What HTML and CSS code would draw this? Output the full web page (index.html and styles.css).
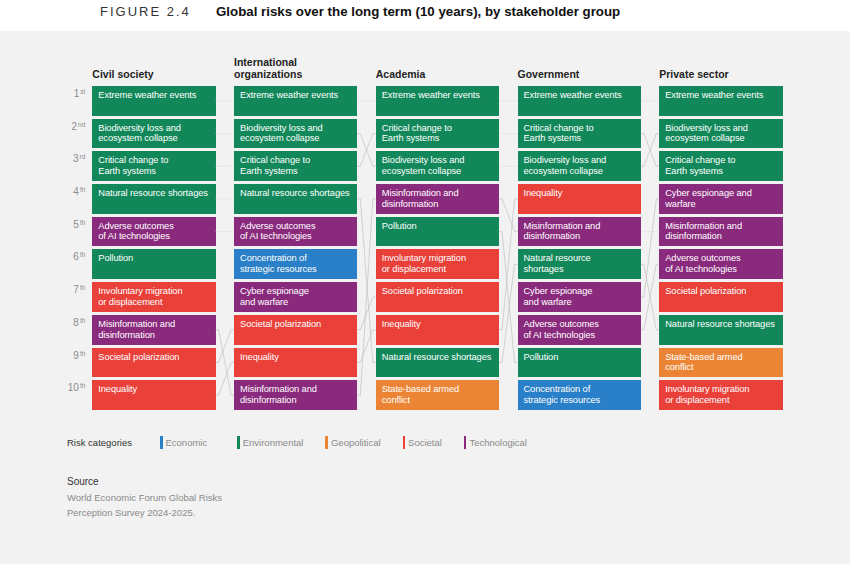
FILE: index.html
```html
<!DOCTYPE html>
<html lang="en">
<head>
<meta charset="utf-8">
<title>Global risks over the long term (10 years), by stakeholder group</title>
<link rel="stylesheet" href="styles.css">
</head>
<body>
<header class="title">
  <span class="fig-num">FIGURE 2.4</span>
  <h1 class="fig-title">Global risks over the long term (10 years), by stakeholder group</h1>
</header>
<main class="panel">
  <div class="chart">
    <div class="ranks">
      <div class="rank">1<sup>st</sup></div>
      <div class="rank">2<sup>nd</sup></div>
      <div class="rank">3<sup>rd</sup></div>
      <div class="rank">4<sup>th</sup></div>
      <div class="rank">5<sup>th</sup></div>
      <div class="rank">6<sup>th</sup></div>
      <div class="rank">7<sup>th</sup></div>
      <div class="rank">8<sup>th</sup></div>
      <div class="rank">9<sup>th</sup></div>
      <div class="rank">10<sup>th</sup></div>
    </div>
    <div class="col">
      <div class="col-head">Civil society</div>
      <div class="box env">Extreme weather events</div>
      <div class="box env">Biodiversity loss and<br>ecosystem collapse</div>
      <div class="box env">Critical change to<br>Earth systems</div>
      <div class="box env">Natural resource shortages</div>
      <div class="box tech">Adverse outcomes<br>of AI technologies</div>
      <div class="box env">Pollution</div>
      <div class="box soc">Involuntary migration<br>or displacement</div>
      <div class="box tech">Misinformation and<br>disinformation</div>
      <div class="box soc">Societal polarization</div>
      <div class="box soc">Inequality</div>
    </div>
    <div class="col">
      <div class="col-head">International<br>organizations</div>
      <div class="box env">Extreme weather events</div>
      <div class="box env">Biodiversity loss and<br>ecosystem collapse</div>
      <div class="box env">Critical change to<br>Earth systems</div>
      <div class="box env">Natural resource shortages</div>
      <div class="box tech">Adverse outcomes<br>of AI technologies</div>
      <div class="box econ">Concentration of<br>strategic resources</div>
      <div class="box tech">Cyber espionage<br>and warfare</div>
      <div class="box soc">Societal polarization</div>
      <div class="box soc">Inequality</div>
      <div class="box tech">Misinformation and<br>disinformation</div>
    </div>
    <div class="col">
      <div class="col-head">Academia</div>
      <div class="box env">Extreme weather events</div>
      <div class="box env">Critical change to<br>Earth systems</div>
      <div class="box env">Biodiversity loss and<br>ecosystem collapse</div>
      <div class="box tech">Misinformation and<br>disinformation</div>
      <div class="box env">Pollution</div>
      <div class="box soc">Involuntary migration<br>or displacement</div>
      <div class="box soc">Societal polarization</div>
      <div class="box soc">Inequality</div>
      <div class="box env">Natural resource shortages</div>
      <div class="box geo">State-based armed<br>conflict</div>
    </div>
    <div class="col">
      <div class="col-head">Government</div>
      <div class="box env">Extreme weather events</div>
      <div class="box env">Critical change to<br>Earth systems</div>
      <div class="box env">Biodiversity loss and<br>ecosystem collapse</div>
      <div class="box soc">Inequality</div>
      <div class="box tech">Misinformation and<br>disinformation</div>
      <div class="box env">Natural resource<br>shortages</div>
      <div class="box tech">Cyber espionage<br>and warfare</div>
      <div class="box tech">Adverse outcomes<br>of AI technologies</div>
      <div class="box env">Pollution</div>
      <div class="box econ">Concentration of<br>strategic resources</div>
    </div>
    <div class="col">
      <div class="col-head">Private sector</div>
      <div class="box env">Extreme weather events</div>
      <div class="box env">Biodiversity loss and<br>ecosystem collapse</div>
      <div class="box env">Critical change to<br>Earth systems</div>
      <div class="box tech">Cyber espionage and<br>warfare</div>
      <div class="box tech">Misinformation and<br>disinformation</div>
      <div class="box tech">Adverse outcomes<br>of AI technologies</div>
      <div class="box soc">Societal polarization</div>
      <div class="box env">Natural resource shortages</div>
      <div class="box geo">State-based armed<br>conflict</div>
      <div class="box soc">Involuntary migration<br>or displacement</div>
    </div>
    <svg class="lines" viewBox="0 0 715.6 354" aria-hidden="true">
      <g class="same">
        <path d="M148.6 44.85H167.05M148.6 77.55H167.05M148.6 110.25H167.05M148.6 142.95H167.05M148.6 175.65H167.05"/>
        <path d="M290.35 44.85H308.8"/>
        <path d="M432.1 44.85H450.55M432.1 77.55H450.55M432.1 110.25H450.55"/>
        <path d="M573.85 44.85H592.3M573.85 175.65H592.3"/>
      </g>
      <g class="moved">
        <path d="M148.6 273.75H151.6L164.05 339.15H167.05"/>
        <path d="M148.6 306.45H151.6L164.05 273.75H167.05"/>
        <path d="M148.6 339.15H151.6L164.05 306.45H167.05"/>

        <path d="M290.35 77.55H293.35L305.8 110.25H308.8"/>
        <path d="M290.35 110.25H293.35L305.8 77.55H308.8"/>
        <path d="M290.35 142.95H293.35L305.8 306.45H308.8"/>
        <path d="M290.35 273.75H293.35L305.8 241.05H308.8"/>
        <path d="M290.35 306.45H293.35L305.8 273.75H308.8"/>
        <path d="M290.35 339.15H293.35L305.8 142.95H308.8"/>

        <path d="M432.1 142.95H435.1L447.55 175.65H450.55"/>
        <path d="M432.1 175.65H435.1L447.55 306.45H450.55"/>
        <path d="M432.1 273.75H435.1L447.55 142.95H450.55"/>
        <path d="M432.1 306.45H435.1L447.55 208.35H450.55"/>

        <path d="M573.85 77.55H576.85L589.3 110.25H592.3"/>
        <path d="M573.85 110.25H576.85L589.3 77.55H592.3"/>
        <path d="M573.85 208.35H576.85L589.3 273.75H592.3"/>
        <path d="M573.85 241.05H576.85L589.3 142.95H592.3"/>
        <path d="M573.85 273.75H576.85L589.3 208.35H592.3"/>
      </g>
    </svg>
  </div>

  <div class="legend">
    <span class="legend-label">Risk categories</span>
    <span class="legend-item legend-item-wide"><i class="swatch econ"></i>Economic</span>
    <span class="legend-item"><i class="swatch env"></i>Environmental</span>
    <span class="legend-item"><i class="swatch geo"></i>Geopolitical</span>
    <span class="legend-item"><i class="swatch soc"></i>Societal</span>
    <span class="legend-item"><i class="swatch tech"></i>Technological</span>
  </div>

  <div class="source">
    <div class="source-label">Source</div>
    <div class="source-text">World Economic Forum Global Risks<br>Perception Survey 2024-2025.</div>
  </div>
</main>
</body>
</html>
```

FILE: styles.css
```css
html, body {
  margin: 0;
  padding: 0;
}

body {
  width: 850px;
  height: 564px;
  overflow: hidden;
  background: #ffffff;
  font-family: "Liberation Sans", Arial, Helvetica, sans-serif;
  color: #222;
}

.title {
  height: 31px;
  box-sizing: border-box;
  padding: 4px 0 0 100px;
  display: flex;
  align-items: baseline;
  line-height: 16px;
}

.fig-num {
  width: 116px;
  font-size: 13px;
  letter-spacing: 2px;
  color: #333;
}

.fig-title {
  margin: 0;
  font-size: 13.3px;
  font-weight: bold;
  color: #111;
}

.panel {
  display: block;
  background: #f2f2f2;
  height: 533px;
  box-sizing: border-box;
  padding: 25px 0 0 67px;
}

.chart {
  position: relative;
  display: flex;
  width: 715.6px;
  height: 354px;
}

.lines {
  position: absolute;
  left: 0;
  top: 0;
  width: 715.6px;
  height: 354px;
  overflow: visible;
  pointer-events: none;
}

.lines path {
  fill: none;
}

.lines .same path {
  stroke: #cfcfcf;
  stroke-width: 0.8;
  stroke-dasharray: 1 1.5;
}

.lines .moved path {
  stroke: #c2c2c2;
  stroke-width: 0.7;
}

.ranks {
  width: 18.3px;
  margin-right: 7px;
  padding-top: 30px;
  display: flex;
  flex-direction: column;
  gap: 3px;
}

.rank {
  height: 29.7px;
  box-sizing: border-box;
  padding-top: 3px;
  text-align: right;
  font-size: 10px;
  line-height: 10px;
  color: #8c8c8c;
  white-space: nowrap;
}

.rank sup {
  font-size: 6.5px;
  line-height: 0;
  vertical-align: 3px;
  margin-left: 1px;
}

.col {
  width: 123.3px;
  display: flex;
  flex-direction: column;
  gap: 3px;
}

.col + .col {
  margin-left: 18.45px;
}

.col-head {
  height: 24px;
  margin-bottom: 3px;
  display: flex;
  align-items: flex-end;
  font-size: 10.5px;
  font-weight: bold;
  line-height: 11.5px;
  color: #222;
}

.box {
  height: 29.7px;
  box-sizing: border-box;
  padding: 4px 6px 0;
  color: #fff;
  font-size: 9.3px;
  line-height: 10.7px;
  letter-spacing: -0.1px;
  white-space: nowrap;
  position: relative;
}

.env { background: #12885a; }
.tech { background: #8a2a7d; }
.soc { background: #e9403a; }
.econ { background: #2a80c8; }
.geo { background: #eb8535; }

.legend {
  display: flex;
  align-items: center;
  height: 13px;
  margin-top: 26px;
  font-size: 9.5px;
  line-height: 13px;
}

.legend-label {
  width: 93px;
  color: #333;
}

.legend-item {
  display: flex;
  align-items: center;
  gap: 3px;
  margin-right: 22px;
  color: #8a8a8a;
}

.legend-item-wide {
  margin-right: 30px;
}

.swatch {
  display: block;
  width: 2.5px;
  height: 13px;
}

.source {
  margin-top: 25px;
  line-height: 15.5px;
}

.source-label {
  font-size: 10px;
  color: #333;
}

.source-text {
  font-size: 9.5px;
  color: #8a8a8a;
}
```
